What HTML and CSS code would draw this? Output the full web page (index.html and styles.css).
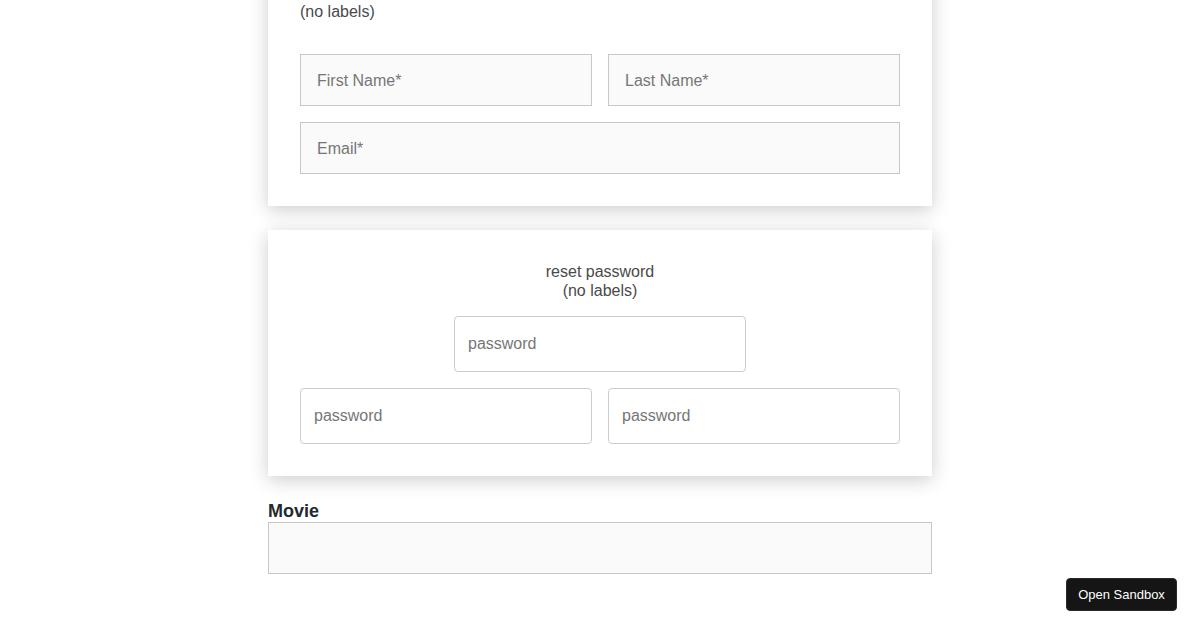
FILE: index.html
```html
<!DOCTYPE html>
<html>
<head>
<meta charset="utf-8">
<link rel="stylesheet" href="styles.css">
</head>
<body>
<div class="page">
  <section class="card">
    <div class="head head-left">
      <div>(no labels)</div>
    </div>
    <div class="row">
      <input class="flat" type="text" placeholder="First Name*">
      <input class="flat" type="text" placeholder="Last Name*">
    </div>
    <div class="row">
      <input class="flat" type="email" placeholder="Email*">
    </div>
  </section>

  <section class="card">
    <div class="head head-center">
      <div>reset password</div>
      <div>(no labels)</div>
    </div>
    <div class="row row-center">
      <input class="round" type="password" placeholder="password">
    </div>
    <div class="row">
      <input class="round" type="password" placeholder="password">
      <input class="round" type="password" placeholder="password">
    </div>
  </section>

  <div class="field">
    <label class="field-label">Movie</label>
    <input class="flat movie" type="text">
  </div>
</div>
<button class="sandbox">Open Sandbox</button>
</body>
</html>
```

FILE: styles.css
```css
html, body {
  margin: 0;
  padding: 0;
  background: #ffffff;
  font-family: "Liberation Sans", Arial, sans-serif;
  color: #444444;
}

.page {
  width: 664px;
  margin: -30px auto 0;
  display: flex;
  flex-direction: column;
  gap: 24px;
}

.card {
  background: #ffffff;
  padding: 32px;
  box-shadow: 0 4px 18px rgba(0, 0, 0, 0.2);
  display: flex;
  flex-direction: column;
  gap: 16px;
}

.head {
  font-size: 16px;
  line-height: 19px;
  color: #4a4a4a;
}

.head-left {
  text-align: left;
  margin-bottom: 17px;
}

.head-center {
  text-align: center;
}

.row {
  display: flex;
  gap: 16px;
}

.row-center {
  justify-content: center;
}

input {
  box-sizing: border-box;
  font-family: "Liberation Sans", Arial, sans-serif;
  font-size: 16px;
  color: #333333;
  outline: none;
  margin: 0;
}

input::placeholder {
  color: #767676;
  opacity: 1;
}

.flat {
  flex: 1;
  min-width: 0;
  height: 52px;
  border: 1px solid #c8c8c8;
  border-radius: 0;
  background: #fafafa;
  padding: 2px 16px 0;
}

.round {
  width: 292px;
  height: 56px;
  border: 1px solid #cccccc;
  border-radius: 4px;
  background: #ffffff;
  padding: 0 13px;
}

.row .round {
  flex: 0 0 292px;
}

.field {
  display: flex;
  flex-direction: column;
}

.field-label {
  font-size: 18px;
  line-height: 22px;
  font-weight: bold;
  color: #1e2b30;
}

.movie {
  flex: none;
  width: 100%;
}

.sandbox {
  position: fixed;
  right: 23px;
  bottom: 19px;
  width: 111px;
  height: 33px;
  background: #151515;
  color: #ffffff;
  border: 1px solid #2a2a2a;
  border-radius: 4px;
  font-family: "Liberation Sans", Arial, sans-serif;
  font-size: 13px;
  padding: 0;
}
```
